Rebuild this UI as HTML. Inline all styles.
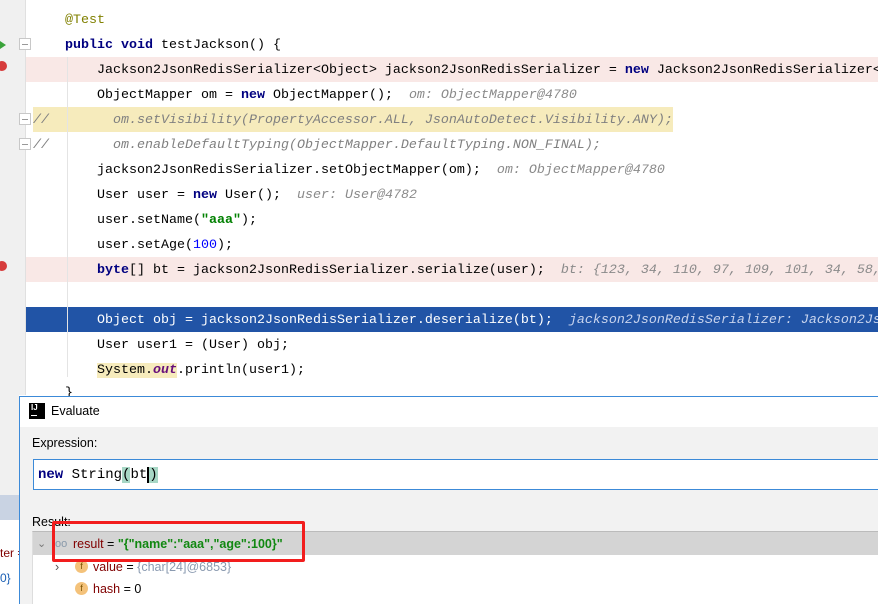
<!DOCTYPE html>
<html><head><meta charset="utf-8"><style>
*{margin:0;padding:0;box-sizing:border-box}
body{width:878px;height:604px;overflow:hidden;background:#fff;position:relative;font-family:"Liberation Mono",monospace;font-size:13.33px}
.g{position:absolute;left:0;top:0;width:26px;height:395px;background:#f0f0f0;border-right:1px solid #e0e0e0}
.row{position:absolute;left:26px;right:0;height:25px;line-height:27px;white-space:pre;color:#000}
.t{position:absolute;left:65px}
.k{color:#000080;font-weight:bold}
.c{color:#808080;font-style:italic}
.h{color:#8a8a8a;font-style:italic}
.an{color:#808000}
.s{color:#008000;font-weight:bold}
.n{color:#0000ff}
.ig{position:absolute;left:67px;top:57px;width:1px;height:320px;background:#e4e4e4}
.fold{position:absolute;left:19px;width:12px;height:12px;border:1px solid #c8c8c8;background:#fff}
.fold:after{content:"";position:absolute;left:2px;top:5px;width:6px;height:1px;background:#999}
.dlg{position:absolute;left:19px;top:396px;right:0;bottom:0;background:#f2f2f2;border-left:1px solid #3c8ad8;border-top:1px solid #3c8ad8;font-family:"Liberation Sans",sans-serif;font-size:12px}
</style></head><body>
<div class="g"></div>
<div class="row" style="top:57px;background:#f9e8e6"></div>
<div class="row" style="top:107px;left:33px;right:205px;background:#f6ebbc"></div>
<div class="row" style="top:257px;background:#f9e8e6"></div>
<div class="row" style="top:307px;background:#2154a6"></div>
<div class="ig"></div>
<div class="fold" style="top:38px"></div>
<div class="fold" style="top:113px"></div>
<div class="fold" style="top:138px"></div>
<div style="position:absolute;left:0;top:41px;width:0;height:0;border-left:6px solid #3aa33a;border-top:4px solid transparent;border-bottom:4px solid transparent"></div>
<div style="position:absolute;left:-3px;top:61px;width:10px;height:10px;border-radius:50%;background:#d63c3c"></div>
<div style="position:absolute;left:-3px;top:261px;width:10px;height:10px;border-radius:50%;background:#d63c3c"></div>
<div class="row" style="top:7px"><span class="t an" style="left:39px">@Test</span></div>
<div class="row" style="top:32px"><span class="t" style="left:39px"><span class="k">public void</span> testJackson() {</span></div>
<div class="row" style="top:57px"><span class="t" style="left:71px">Jackson2JsonRedisSerializer&lt;Object&gt; jackson2JsonRedisSerializer = <span class="k">new</span> Jackson2JsonRedisSerializer&lt;</span></div>
<div class="row" style="top:82px"><span class="t" style="left:71px">ObjectMapper om = <span class="k">new</span> ObjectMapper();  <span class="h">om: ObjectMapper@4780</span></span></div>
<div class="row" style="top:107px"><span class="t c" style="left:7px">//        om.setVisibility(PropertyAccessor.ALL, JsonAutoDetect.Visibility.ANY);</span></div>
<div class="row" style="top:132px"><span class="t c" style="left:7px">//        om.enableDefaultTyping(ObjectMapper.DefaultTyping.NON_FINAL);</span></div>
<div class="row" style="top:157px"><span class="t" style="left:71px">jackson2JsonRedisSerializer.setObjectMapper(om);  <span class="h">om: ObjectMapper@4780</span></span></div>
<div class="row" style="top:182px"><span class="t" style="left:71px">User user = <span class="k">new</span> User();  <span class="h">user: User@4782</span></span></div>
<div class="row" style="top:207px"><span class="t" style="left:71px">user.setName(<span class="s">"aaa"</span>);</span></div>
<div class="row" style="top:232px"><span class="t" style="left:71px">user.setAge(<span class="n">100</span>);</span></div>
<div class="row" style="top:257px"><span class="t" style="left:71px"><span class="k">byte</span>[] bt = jackson2JsonRedisSerializer.serialize(user);  <span class="h">bt: {123, 34, 110, 97, 109, 101, 34, 58,</span></span></div>
<div class="row" style="top:307px;color:#fff"><span class="t" style="left:71px">Object obj = jackson2JsonRedisSerializer.deserialize(bt);  <span style="font-style:italic;color:#c8d4ee">jackson2JsonRedisSerializer: Jackson2Js</span></span></div>
<div class="row" style="top:332px"><span class="t" style="left:71px">User user1 = (User) obj;</span></div>
<div class="row" style="top:357px"><span class="t" style="left:71px"><span style="background:#f6ebbc">System.<b style="color:#660e7a;font-style:italic">out</b></span>.println(user1);</span></div>
<div class="row" style="top:380px"><span class="t" style="left:39px">}</span></div>
<div style="position:absolute;left:0;top:395px;width:19px;height:209px;background:#f0f0f0"></div>
<div style="position:absolute;left:0;top:495px;width:19px;height:25px;background:#c9d3e3"></div>
<div style="position:absolute;left:0;top:520px;width:19px;height:84px;background:#fff"></div>
<div style="position:absolute;left:0;top:546px;font:12px 'Liberation Sans',sans-serif;color:#800000">ter =</div>
<div style="position:absolute;left:0;top:571px;font:12px 'Liberation Sans',sans-serif;color:#1a5fb4">0}</div>
<div class="dlg">
 <div style="height:30px;background:#fff;position:relative">
  <div style="position:absolute;left:9px;top:6px;width:16px;height:16px;background:#000;color:#fff;font-size:8px;font-weight:bold;line-height:9px;padding-left:2px">IJ<div style="width:6px;height:1px;background:#fff;margin-top:3px"></div></div>
  <div style="position:absolute;left:31px;top:7px;font-size:12.5px">Evaluate</div>
 </div>
 <div style="position:absolute;left:12px;top:39px;font-size:12.5px">Expression:</div>
 <div style="position:absolute;left:13px;top:62px;right:-1px;height:31px;background:#fff;border:1px solid #3c8ad8;font-family:'Liberation Mono',monospace;font-size:14px;line-height:31px;padding-left:4px"><span class="k">new</span> String<span style="background:#a7d7c5">(</span>bt<span style="background:#a7d7c5;border-left:2px solid #000">)</span></div>
 <div style="position:absolute;left:12px;top:118px;font-size:12.5px">Result:</div>
 <div style="position:absolute;left:12px;top:134px;right:0;bottom:0;background:#fff;border-top:1px solid #bbb;border-left:1px solid #ddd">
  <div style="height:23px;background:#d4d4d4;line-height:24px;position:relative">
   <span style="position:absolute;left:4px;color:#777;font-size:11px">&#8964;</span>
   <span style="position:absolute;left:22px;color:#8899aa;font-size:11px">oo</span>
   <span style="position:absolute;left:40px;font-size:12.5px"><span style="color:#800000">result</span> = <b style="color:#118811">"{"name":"aaa","age":100}"</b></span>
  </div>
  <div style="height:22px;line-height:24px;position:relative;font-size:12.5px">
   <span style="position:absolute;left:22px;color:#555">&#8250;</span>
   <span style="position:absolute;left:42px;top:5px;width:13px;height:13px;border-radius:50%;background:#f4c27a;font-size:9px;line-height:13px;text-align:center;color:#7a5300">f</span>
   <span style="position:absolute;left:60px"><span style="color:#800000">value</span> = <span style="color:#8a9ab0">{char[24]@6853}</span></span>
  </div>
  <div style="height:22px;line-height:24px;position:relative;font-size:12.5px">
   <span style="position:absolute;left:42px;top:5px;width:13px;height:13px;border-radius:50%;background:#f4c27a;font-size:9px;line-height:13px;text-align:center;color:#7a5300">f</span>
   <span style="position:absolute;left:60px"><span style="color:#800000">hash</span> = 0</span>
  </div>
 </div>
</div>
<div style="position:absolute;left:52px;top:521px;width:253px;height:41px;border:3px solid #f21d1d;border-radius:2px"></div>
</body></html>
